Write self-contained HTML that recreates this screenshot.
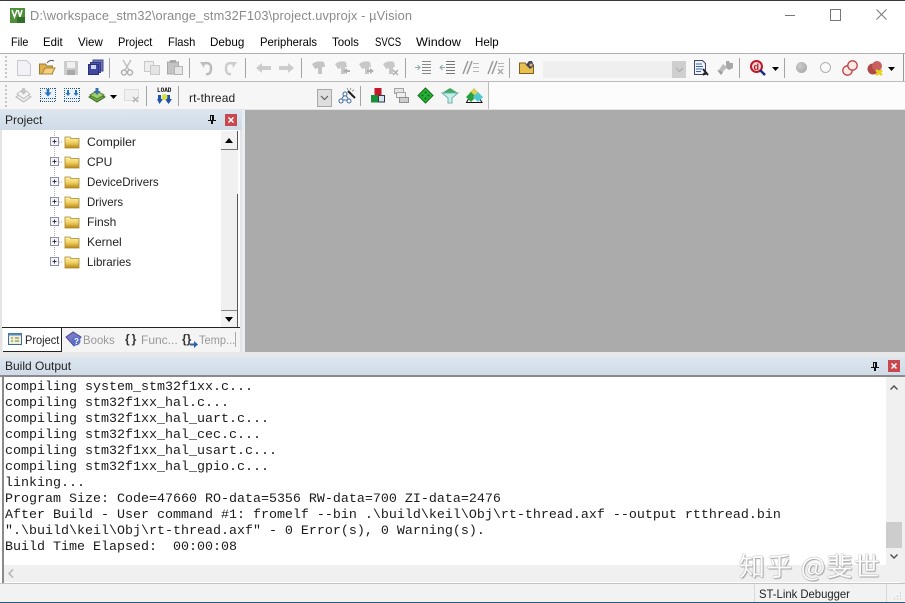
<!DOCTYPE html>
<html><head><meta charset="utf-8"><style>
html,body{margin:0;padding:0}
body{width:905px;height:603px;position:relative;overflow:hidden;background:#fff;font-family:"Liberation Sans",sans-serif;color:#000}
.a{position:absolute}
.t{position:absolute;white-space:pre;font-size:12px;line-height:16px;transform-origin:left center}
.m{position:absolute;white-space:pre;font-family:"Liberation Mono",monospace;font-size:13.33px;line-height:16px;color:#1a1a1a;left:5px}
svg{position:absolute;overflow:visible}
.sep{position:absolute;width:1px;background:#a4a4a4}
.tree{position:absolute;left:87px;font-size:12px;line-height:16px;color:#222;white-space:pre;transform-origin:left center}
</style></head><body>
<div class="a" style="left:0;top:0;width:905px;height:1px;background:#3a3a3a"></div>
<svg style="left:10px;top:8px" width="15" height="15"><rect width="15" height="15" fill="#4f8f3a"/><path d="M2 2l2.500 7 2.500-7M8 2l2 7 2-7" stroke="#fff" stroke-width="1.500" fill="none"/><rect x="7" y="9" width="8" height="6" fill="#2f6f2a"/></svg>
<div class="t" style="left:30px;top:8px;font-size:12.8px;letter-spacing:.13px;color:#8a8a8a">D:\workspace_stm32\orange_stm32F103\project.uvprojx - µVision</div>
<div class="a" style="left:785px;top:15px;width:10px;height:1px;background:#777"></div>
<div class="a" style="left:830px;top:9px;width:9px;height:10px;border:1px solid #777"></div>
<svg style="left:876px;top:9px" width="11" height="11"><path d="M.5.500l10 10M10.500.500l-10 10" stroke="#777" fill="none"/></svg>

<div class="t" style="left:11px;top:34px;transform:scaleX(.9)">File</div>
<div class="t" style="left:43px;top:34px;transform:scaleX(.95)">Edit</div>
<div class="t" style="left:78px;top:34px;transform:scaleX(.96)">View</div>
<div class="t" style="left:118px;top:34px;transform:scaleX(.92)">Project</div>
<div class="t" style="left:168px;top:34px;transform:scaleX(.93)">Flash</div>
<div class="t" style="left:210px;top:34px;transform:scaleX(.97)">Debug</div>
<div class="t" style="left:260px;top:34px;transform:scaleX(.94)">Peripherals</div>
<div class="t" style="left:332px;top:34px;transform:scaleX(.96)">Tools</div>
<div class="t" style="left:375px;top:34px;transform:scaleX(.8)">SVCS</div>
<div class="t" style="left:416px;top:34px;transform:scaleX(1.05)">Window</div>
<div class="t" style="left:475px;top:34px;transform:scaleX(.96)">Help</div>

<div class="a" style="left:0;top:53px;width:905px;height:1px;background:#b0b0b0"></div>
<div class="a" style="left:0;top:54px;width:905px;height:27px;background:#f8f8f8"></div>
<div class="a" style="left:0;top:81px;width:905px;height:1px;background:#bcbcbc"></div>
<div class="a" style="left:0;top:82px;width:488px;height:27px;background:#f6f6f6;border-right:1px solid #bcbcbc"></div>
<div class="a" style="left:489px;top:82px;width:416px;height:27px;background:#fcfcfc"></div>
<div class="a" style="left:5px;top:56px;width:1px;height:22px;border-left:2px dotted #c4c4c4"></div>
<div class="a" style="left:5px;top:85px;width:1px;height:22px;border-left:2px dotted #c4c4c4"></div>
<div class="a" style="left:903px;top:54px;width:1px;height:27px;background:#999"></div>

<!-- toolbar 1 -->
<svg style="left:17px;top:60px" width="14" height="16"><path d="M.5.500h9l4 4v11H.5z" fill="#f2f2f6" stroke="#c8c8d0"/></svg>
<svg style="left:39px;top:59px" width="17" height="16"><path d="M.5 5h6l1 2h6v8H.5z" fill="#e0b050" stroke="#9a7a30"/><path d="M3 15l3-6h10l-3 6z" fill="#f4d080" stroke="#a88838"/><path d="M8 4q3-4 7-2" stroke="#556" fill="none"/></svg>
<svg style="left:64px;top:61px" width="14" height="14"><rect width="14" height="14" fill="#cccccc"/><rect x="3" y="1" width="8" height="6" fill="#f0f0f0"/><rect x="3" y="9" width="8" height="5" fill="#a8a8a8"/></svg>
<svg style="left:88px;top:60px" width="15" height="15"><rect x="5" y="0" width="10" height="11" fill="#7078b8" stroke="#404890"/><rect x="2.500" y="2.500" width="10" height="10" fill="#5058a8" stroke="#303880"/><rect x=".5" y="4.500" width="10" height="10" fill="#4048a0" stroke="#282f78"/><rect x="3" y="5" width="5" height="4" fill="#cfd4ee"/></svg>
<div class="sep" style="left:109px;top:58px;height:20px"></div>
<svg style="left:121px;top:60px" width="12" height="16"><path d="M2 0l6 10M10 0L4 10" stroke="#c0c0c0" stroke-width="1.500"/><circle cx="3" cy="12.500" r="2.500" fill="none" stroke="#b0b0b0" stroke-width="1.500"/><circle cx="9" cy="12.500" r="2.500" fill="none" stroke="#b0b0b0" stroke-width="1.500"/></svg>
<svg style="left:144px;top:61px" width="16" height="14"><rect x=".5" y=".5" width="9" height="10" fill="#eee" stroke="#c8c8c8"/><rect x="6.500" y="4.500" width="9" height="9" fill="#e4e4e4" stroke="#c8c8c8"/></svg>
<svg style="left:167px;top:60px" width="16" height="15"><rect x=".5" y="2" width="11" height="12" fill="#c4c4c4" stroke="#aaa"/><rect x="3" y="0" width="6" height="3" fill="#a8a8a8"/><rect x="7.500" y="6.500" width="8" height="8" fill="#e6e6e6" stroke="#b4b4b4"/></svg>
<div class="sep" style="left:189px;top:58px;height:20px"></div>
<svg style="left:200px;top:61px" width="13" height="14"><path d="M2 3q9-3 9 4t-5 6" stroke="#bcbcbc" stroke-width="2.500" fill="none"/><path d="M0 1l5 0-1 6z" fill="#bcbcbc"/></svg>
<svg style="left:224px;top:61px" width="13" height="14"><path d="M11 3q-9-3-9 4t5 6" stroke="#cccccc" stroke-width="2.500" fill="none"/><path d="M13 1H8l1 6z" fill="#cccccc"/></svg>
<div class="sep" style="left:245px;top:58px;height:20px"></div>
<svg style="left:256px;top:62px" width="15" height="12"><path d="M0 6l6-5v3h9v4H6v3z" fill="#cccccc"/></svg>
<svg style="left:279px;top:62px" width="15" height="12"><path d="M15 6L9 1v3H0v4h9v3z" fill="#cccccc"/></svg>
<div class="sep" style="left:301px;top:58px;height:20px"></div>
<svg style="left:312px;top:61px" width="14" height="14"><path d="M0 3q5-4 12-2l1 5-3 0 0 7H6V7L3 8z" fill="#c4c4c4"/></svg>
<svg style="left:335px;top:61px" width="16" height="15"><path d="M0 3q5-4 11-2l1 5-2 0 0 7H6V7L3 8z" fill="#c8c8c8"/><path d="M8 10l4-3v2h3v2h-3v2z" fill="#b0b0b0"/></svg>
<svg style="left:359px;top:61px" width="16" height="15"><path d="M0 3q5-4 11-2l1 5-2 0 0 7H6V7L3 8z" fill="#c8c8c8"/><path d="M15 10l-4-3v2H8v2h3v2z" fill="#b0b0b0"/></svg>
<svg style="left:383px;top:61px" width="16" height="15"><path d="M0 3q5-4 11-2l1 5-2 0 0 7H6V7L3 8z" fill="#c8c8c8"/><path d="M10 9l5 5M15 9l-5 5" stroke="#b0b0b0" stroke-width="1.500"/></svg>
<div class="sep" style="left:405px;top:58px;height:20px"></div>
<svg style="left:415px;top:61px" width="16" height="13"><path d="M7 .5h9M7 3.500h9M7 6.500h9M7 9.500h9M7 12.500h9" stroke="#888"/><path d="M0 6.500h4M2.500 4l2.500 2.500L2.500 9" stroke="#8aa" fill="none"/></svg>
<svg style="left:439px;top:61px" width="16" height="13"><path d="M7 .5h9M7 3.500h9M7 6.500h9M7 9.500h9M7 12.500h9" stroke="#777"/><path d="M1 6.500h5M3.500 4L1 6.500 3.500 9" stroke="#8aa" fill="none"/></svg>
<svg style="left:463px;top:61px" width="16" height="13"><path d="M0 13L5 0M4 13L9 0" stroke="#999" stroke-width="1.500"/><path d="M10 2.500h6M10 6.500h6M10 10.500h6" stroke="#b4b4b4"/></svg>
<svg style="left:488px;top:61px" width="16" height="14"><path d="M0 13L5 0M4 13L9 0" stroke="#999" stroke-width="1.500"/><path d="M10 2.500h6M10 5.500h6" stroke="#b4b4b4"/><path d="M10 8l5 5M15 8l-5 5" stroke="#aaa" stroke-width="1.500"/></svg>
<div class="sep" style="left:509px;top:58px;height:20px"></div>
<svg style="left:519px;top:60px" width="16" height="14"><path d="M.5 3h6l1 2h7v8.500H.5z" fill="#e8c050" stroke="#806020"/><path d="M7 5l3-4h3l2 5-4 3z" fill="#445"/><circle cx="12" cy="5" r="1.500" fill="#e8b080"/></svg>
<div class="a" style="left:543px;top:61px;width:129px;height:17px;background:#efefef"></div>
<div class="a" style="left:672px;top:61px;width:14px;height:17px;background:#cfcfcf"></div>
<svg style="left:675px;top:67px" width="9" height="6"><path d="M1 1l3.500 3.500L8 1" stroke="#aaa" stroke-width="1.200" fill="none"/></svg>
<svg style="left:694px;top:60px" width="15" height="16"><path d="M.5.500h8l3 3v11H.5z" fill="#eef2fa" stroke="#446"/><path d="M2 4h6M2 6.500h7M2 9h6M2 11.500h5" stroke="#3a6ab0"/><path d="M9 9l5 6M11 13l-2 2" stroke="#222" stroke-width="2"/></svg>
<svg style="left:717px;top:61px" width="16" height="14"><path d="M9 0h3l1 2h3v5l-4 2-3-2z" fill="#a8a8a8"/><path d="M6 3l4 3-5 6-4-2z" fill="#bcbcbc"/><path d="M0 9l4 5 2-3z" fill="#999"/></svg>
<div class="sep" style="left:739px;top:58px;height:20px"></div>
<svg style="left:750px;top:60px" width="16" height="16"><circle cx="6.500" cy="6.500" r="5.500" fill="#f4d8dc" stroke="#c01828" stroke-width="2"/><text x="3.500" y="10" font-size="9" font-weight="bold" font-family="Liberation Sans" fill="#c01828">d</text><path d="M10 10l5 5" stroke="#1a2a80" stroke-width="2.500"/></svg>
<svg style="left:772px;top:67px" width="7" height="4"><path d="M0 0h7L3.500 4z" fill="#000"/></svg>
<div class="sep" style="left:784px;top:58px;height:20px"></div>
<div class="a" style="left:796px;top:62px;width:11px;height:11px;border-radius:50%;background:radial-gradient(circle at 40% 35%,#ccc,#a0a0a0)"></div>
<div class="a" style="left:820px;top:62px;width:9px;height:9px;border-radius:50%;background:#fafafa;border:1px solid #b0b0b0"></div>
<svg style="left:842px;top:60px" width="16" height="16"><circle cx="5.500" cy="10.500" r="4.700" fill="#fbeaea" stroke="#c04040" stroke-width="1.300"/><circle cx="10.500" cy="5.500" r="4.700" fill="#fbeaea" stroke="#c04040" stroke-width="1.300"/></svg>
<svg style="left:867px;top:60px" width="17" height="16"><circle cx="6" cy="9" r="5.500" fill="#b04848"/><circle cx="10" cy="6" r="5" fill="#c86060"/><path d="M9 10l6 5M15 10l-6 5" stroke="#e8d020" stroke-width="2.500"/></svg>
<svg style="left:888px;top:67px" width="7" height="4"><path d="M0 0h7L3.500 4z" fill="#000"/></svg>

<!-- toolbar 2 -->
<svg style="left:15px;top:88px" width="17" height="15"><path d="M8.500 4L16 9l-7.500 5L1 9z" fill="#eaeaea" stroke="#b8b8b8"/><path d="M8.500 1L15 6l-6.500 4.500L2 6z" fill="#f4f4f4" stroke="#c0c0c0"/><path d="M7 0h3v3h2L8.500 7 5 3h2z" fill="#c4c4c4"/></svg>
<svg style="left:40px;top:88px" width="16" height="14"><rect x=".5" y=".5" width="15" height="13" fill="#e8f2fa"/><path d="M0 .5h16M0 13.500h16M0 10.500h16M.5 0v14M15.500 0v14" stroke="#335577" stroke-dasharray="1 1"/><path d="M6.700 1h2.600v3.500h2.200L8 8.500l-3.500-4h2.200z" fill="#2a70c0"/></svg>
<svg style="left:64px;top:88px" width="16" height="14"><rect x=".5" y=".5" width="15" height="13" fill="#e8f2fa"/><path d="M0 .5h16M0 13.500h16M0 10.500h16M.5 0v14M15.500 0v14" stroke="#335577" stroke-dasharray="1 1"/><path d="M3 2h2v3h1.500L4 8 1.500 5H3zM11 2h2v3h1.500L12 8 9.500 5H11z" fill="#2a70c0"/></svg>
<svg style="left:89px;top:88px" width="16" height="15"><path d="M8 5l8 4-8 5-8-5z" fill="#68b040" stroke="#406828"/><path d="M8 3l7 4-7 4-7-4z" fill="#a0d070" stroke="#507830"/><path d="M6.500 0h3v3h2L8 7 4.500 3h2z" fill="#3a70a8"/></svg>
<svg style="left:110px;top:95px" width="7" height="4"><path d="M0 0h7L3.500 4z" fill="#000"/></svg>
<svg style="left:124px;top:88px" width="16" height="15"><rect x=".5" y="1.500" width="14" height="11" fill="#f0f0f0" stroke="#c4c4c4" stroke-dasharray="1 1"/><path d="M9 9l5 5M14 9l-5 5" stroke="#b4b4b4" stroke-width="1.500"/></svg>
<div class="sep" style="left:146px;top:86px;height:20px"></div>
<div class="a" style="left:157px;top:88px;font-size:6px;line-height:6px;font-weight:bold;font-family:'Liberation Mono',monospace;color:#111">LOAD</div>
<svg style="left:157px;top:94px" width="15" height="11"><path d="M1 1h3v4h2L2.500 10 0 5h1zM10 1h3v4h2l-3.500 5L8 5h2z" fill="#2050b0"/><circle cx="7.500" cy="3" r="3" fill="#d8e040"/></svg>
<div class="sep" style="left:178px;top:86px;height:20px"></div>
<div class="t" style="left:189px;top:90px;color:#222;letter-spacing:.1px">rt-thread</div>
<div class="a" style="left:317px;top:89px;width:13px;height:16px;background:#dedede;border:1px solid #a8a8a8"></div>
<svg style="left:320px;top:95px" width="9" height="6"><path d="M1 1l3.500 3.500L8 1" stroke="#555" stroke-width="1.100" fill="none"/></svg>
<svg style="left:338px;top:87px" width="18" height="17"><path d="M7 7l-4 6M7 7l4 6M3 13h8" stroke="#3a6aa0" fill="none"/><circle cx="7" cy="7" r="2" fill="#fff" stroke="#3a6aa0"/><circle cx="3" cy="14" r="2" fill="#fff" stroke="#3a6aa0"/><circle cx="11" cy="14" r="2" fill="#fff" stroke="#3a6aa0"/><path d="M10 4l7 7" stroke="#222" stroke-width="2"/><path d="M9 1l1 2M13 1l-1 2M16 3l-2 1" stroke="#999"/></svg>
<div class="sep" style="left:360px;top:86px;height:20px"></div>
<svg style="left:371px;top:88px" width="14" height="15"><rect x="3.500" y="0" width="7" height="7" fill="#c81828"/><rect x="0" y="7" width="7" height="7.500" fill="#189038"/><rect x="7.500" y="7.500" width="6" height="6.500" fill="#d4e4f0" stroke="#334"/></svg>
<svg style="left:394px;top:88px" width="15" height="15"><rect x=".5" y=".5" width="9" height="5" fill="#e4e4e4" stroke="#a4a4a4"/><rect x="2.500" y="4.500" width="9" height="5" fill="#eee" stroke="#a4a4a4"/><rect x="5.500" y="9.500" width="9" height="5" fill="#ccc" stroke="#909090"/></svg>
<svg style="left:418px;top:88px" width="15" height="15"><path d="M7.500 0L15 7.500 7.500 15 0 7.500z" fill="#28b030" stroke="#107018"/><circle cx="7.500" cy="4.500" r="1" fill="#063"/><circle cx="4.500" cy="7.500" r="1" fill="#063"/><circle cx="10.500" cy="7.500" r="1" fill="#063"/><circle cx="7.500" cy="10.500" r="1" fill="#063"/></svg>
<svg style="left:442px;top:88px" width="16" height="15"><path d="M8 0l8 5H0z" fill="#40a860"/><path d="M0 5h16l-6 5v5H6v-5z" fill="#c4f0e8" stroke="#70b0b0"/></svg>
<svg style="left:466px;top:88px" width="17" height="15"><path d="M.5 14.500L8 1l8 13.500z" fill="#fff" stroke="#111"/><path d="M8 0l5 5-5 5-5-5z" fill="#d8d060"/><path d="M5 4l5 5-5 5-5-5z" fill="#28a040"/><path d="M12 4l5 5-5 5-5-5z" fill="#50c8d0"/></svg>

<!-- main -->
<div class="a" style="left:0;top:109px;width:905px;height:249px;background:#e4e4e4"></div>
<div class="a" style="left:245px;top:110px;width:660px;height:242px;background:#ababab"></div>
<div class="a" style="left:242px;top:110px;width:3px;height:242px;background:#e8eef4"></div>

<!-- Project panel -->
<div class="a" style="left:0;top:110px;width:242px;height:20px;background:linear-gradient(#dde6ef,#cfdbe7)"></div>
<div class="t" style="left:5px;top:112px;color:#222">Project</div>
<svg style="left:208px;top:115px" width="8" height="9"><path d="M2 0h4v5h2v1H5v3H3V6H0V5h2z" fill="#111"/><rect x="3" y="1" width="1" height="4" fill="#ddd"/></svg>
<div class="a" style="left:225px;top:114px;width:12px;height:12px;background:#c84850"></div>
<svg style="left:228px;top:117px" width="6" height="6"><path d="M.5.500l5 5M5.500.500l-5 5" stroke="#fff" stroke-width="1.500"/></svg>
<div class="a" style="left:2px;top:130px;width:238px;height:197px;background:#fff"></div>
<div class="a" style="left:221px;top:131px;width:17px;height:196px;background:#f0f0f0"></div>
<div class="a" style="left:221px;top:131px;width:16px;height:18px;background:#f2f2f2;border-right:1px solid #555;border-bottom:1px solid #777"></div>
<svg style="left:225px;top:138px" width="8" height="5"><path d="M0 5h8L4 0z" fill="#000"/></svg>
<div class="a" style="left:221px;top:194px;width:16px;height:116px;background:#f0f0f0;border-right:1px solid #555"></div>
<div class="a" style="left:221px;top:310px;width:16px;height:16px;background:#f2f2f2;border-right:1px solid #555;border-bottom:1px solid #555;border-top:1px solid #888"></div>
<svg style="left:225px;top:317px" width="8" height="5"><path d="M0 0h8L4 5z" fill="#000"/></svg>

<!-- tree -->
<div class="a" style="left:54px;top:131px;height:131px;border-left:1px dotted #b0b0b0"></div>
<svg style="left:50px;top:137px" width="32" height="130">
<defs><linearGradient id="f" x1="0" y1="0" x2="0" y2="1"><stop offset="0" stop-color="#fff4b8"/><stop offset=".5" stop-color="#f0d060"/><stop offset="1" stop-color="#b88818"/></linearGradient>
<g id="i"><path d="M9 5h4" stroke="#aaa" stroke-dasharray="1 1"/><rect x=".5" y=".5" width="8" height="8" fill="#f4f4fa" stroke="#8a90a8"/><path d="M2.500 4.500h4M4.500 2.500v4" stroke="#334"/><path d="M15 0h5l1 1.500h8v9.500H15z" fill="url(#f)" stroke="#a88828" stroke-width=".8"/></g></defs>
<use href="#i" y="0"/><use href="#i" y="20"/><use href="#i" y="40"/><use href="#i" y="60"/><use href="#i" y="80"/><use href="#i" y="100"/><use href="#i" y="120"/>
</svg>
<div class="tree" style="top:134px;transform:scaleX(1.02)">Compiler</div>
<div class="tree" style="top:154px">CPU</div>
<div class="tree" style="top:174px;transform:scaleX(.96)">DeviceDrivers</div>
<div class="tree" style="top:194px;transform:scaleX(.95)">Drivers</div>
<div class="tree" style="top:214px">Finsh</div>
<div class="tree" style="top:234px">Kernel</div>
<div class="tree" style="top:254px;transform:scaleX(.96)">Libraries</div>

<!-- tabs -->
<div class="a" style="left:2px;top:327px;width:238px;height:25px;background:#f4f4f4;border-top:1px solid #222;box-sizing:border-box"></div>
<div class="a" style="left:3px;top:327px;width:59px;height:25px;background:#fff;border-right:1px solid #222;border-bottom:1px solid #222;border-top:1px solid #222;box-sizing:border-box"></div>
<svg style="left:8px;top:333px" width="14" height="12"><rect x=".5" y=".5" width="13" height="11" fill="#f0f0d8" stroke="#3a6a9a"/><rect x=".5" y=".5" width="13" height="2" fill="#5a8ab8"/><path d="M3 5h2M3 8h2M7 5h4M7 8h4" stroke="#7a7a30"/></svg>
<div class="t" style="left:25px;top:332px;color:#222;transform:scaleX(.92)">Project</div>
<svg style="left:65px;top:331px" width="17" height="16"><path d="M1 6l7-5 8 5-7 9z" fill="#7a78c8" stroke="#484898"/><circle cx="11" cy="10" r="4.500" fill="#5a70c8"/><text x="9" y="13" font-size="8" font-weight="bold" font-family="Liberation Sans" fill="#fff">?</text></svg>
<div class="t" style="left:83px;top:332px;color:#999;transform:scaleX(.95)">Books</div>
<div class="t" style="left:125px;top:331px;font-weight:bold;color:#333;letter-spacing:2px">{}</div>
<div class="t" style="left:141px;top:332px;color:#999">Func...</div>
<div class="t" style="left:182px;top:331px;font-weight:bold;color:#333">{}</div>
<svg style="left:190px;top:341px" width="8" height="7"><path d="M0 2.500h4V0l4 3.500L4 7V4.500H0z" fill="#3060a8"/></svg>
<div class="t" style="left:199px;top:332px;color:#999;transform:scaleX(.92)">Temp...</div>
<div class="a" style="left:235px;top:332px;width:1px;height:15px;background:#aaa"></div>

<!-- Build output -->
<div class="a" style="left:0;top:352px;width:905px;height:5px;background:#e8e8e8"></div>
<div class="a" style="left:0;top:357px;width:905px;height:18px;background:linear-gradient(#dde6ef,#cfdbe7)"></div>
<div class="t" style="left:5px;top:358px;color:#222">Build Output</div>
<svg style="left:871px;top:362px" width="8" height="9"><path d="M2 0h4v5h2v1H5v3H3V6H0V5h2z" fill="#111"/><rect x="3" y="1" width="1" height="4" fill="#ddd"/></svg>
<div class="a" style="left:888px;top:360px;width:12px;height:12px;background:#c84850"></div>
<svg style="left:891px;top:363px" width="6" height="6"><path d="M.5.500l5 5M5.500.500l-5 5" stroke="#fff" stroke-width="1.500"/></svg>
<div class="a" style="left:0;top:375px;width:905px;height:2px;background:#8a8a8a"></div>
<div class="a" style="left:2px;top:377px;width:2px;height:206px;background:#8a8a8a"></div>
<div class="a" style="left:900px;top:377px;width:5px;height:207px;background:#f0f0f0"></div>

<div class="m" style="top:380px">compiling system_stm32f1xx.c...</div>
<div class="m" style="top:396px">compiling stm32f1xx_hal.c...</div>
<div class="m" style="top:412px">compiling stm32f1xx_hal_uart.c...</div>
<div class="m" style="top:428px">compiling stm32f1xx_hal_cec.c...</div>
<div class="m" style="top:444px">compiling stm32f1xx_hal_usart.c...</div>
<div class="m" style="top:460px">compiling stm32f1xx_hal_gpio.c...</div>
<div class="m" style="top:476px">linking...</div>
<div class="m" style="top:492px">Program Size: Code=47660 RO-data=5356 RW-data=700 ZI-data=2476</div>
<div class="m" style="top:508px">After Build - User command #1: fromelf --bin .\build\keil\Obj\rt-thread.axf --output rtthread.bin</div>
<div class="m" style="top:524px">".\build\keil\Obj\rt-thread.axf" - 0 Error(s), 0 Warning(s).</div>
<div class="m" style="top:540px">Build Time Elapsed:  00:00:08</div>

<!-- scrollbars -->
<div class="a" style="left:886px;top:377px;width:16px;height:189px;background:#f0f0f0"></div>
<svg style="left:890px;top:385px" width="8" height="5"><path d="M.5 4.500L4 1l3.500 3.500" stroke="#555" stroke-width="1.500" fill="none"/></svg>
<div class="a" style="left:886px;top:522px;width:16px;height:26px;background:#cdcdcd"></div>
<svg style="left:890px;top:554px" width="8" height="5"><path d="M.5.500L4 4 7.500.5" stroke="#555" stroke-width="1.500" fill="none"/></svg>
<div class="a" style="left:4px;top:565px;width:898px;height:17px;background:#f0f0f0"></div>
<svg style="left:8px;top:569px" width="6" height="9"><path d="M5 .5L1 4.500 5 8.500" stroke="#b4b4b4" stroke-width="1.500" fill="none"/></svg>
<div class="a" style="left:0;top:583px;width:905px;height:1px;background:#c4c4c4"></div>

<!-- status bar -->
<div class="a" style="left:0;top:584px;width:905px;height:18px;background:#f2f2f2"></div>
<div class="a" style="left:754px;top:584px;width:1px;height:18px;background:#d8d8d8"></div>
<div class="a" style="left:886px;top:584px;width:1px;height:18px;background:#d8d8d8"></div>
<div class="t" style="left:759px;top:586px;color:#222;transform:scaleX(.94)">ST-Link Debugger</div>
<svg style="left:893px;top:592px" width="9" height="9"><path d="M7 1h1M4 4h1M7 4h1M1 7h1M4 7h1M7 7h1" stroke="#b8b8b8"/></svg>
<div class="a" style="left:0;top:602px;width:905px;height:1px;background:#2a5a80"></div>

<!-- watermark -->
<div class="t" style="left:739px;top:550px;font-family:'Noto Sans CJK SC','Liberation Sans',sans-serif;font-size:26px;line-height:32px;color:#fff;letter-spacing:1.300px;text-shadow:0 0 1px #888,0 0 1px #888,1px 1px 1px #999;opacity:.85">知乎 @斐世</div>
</body></html>
